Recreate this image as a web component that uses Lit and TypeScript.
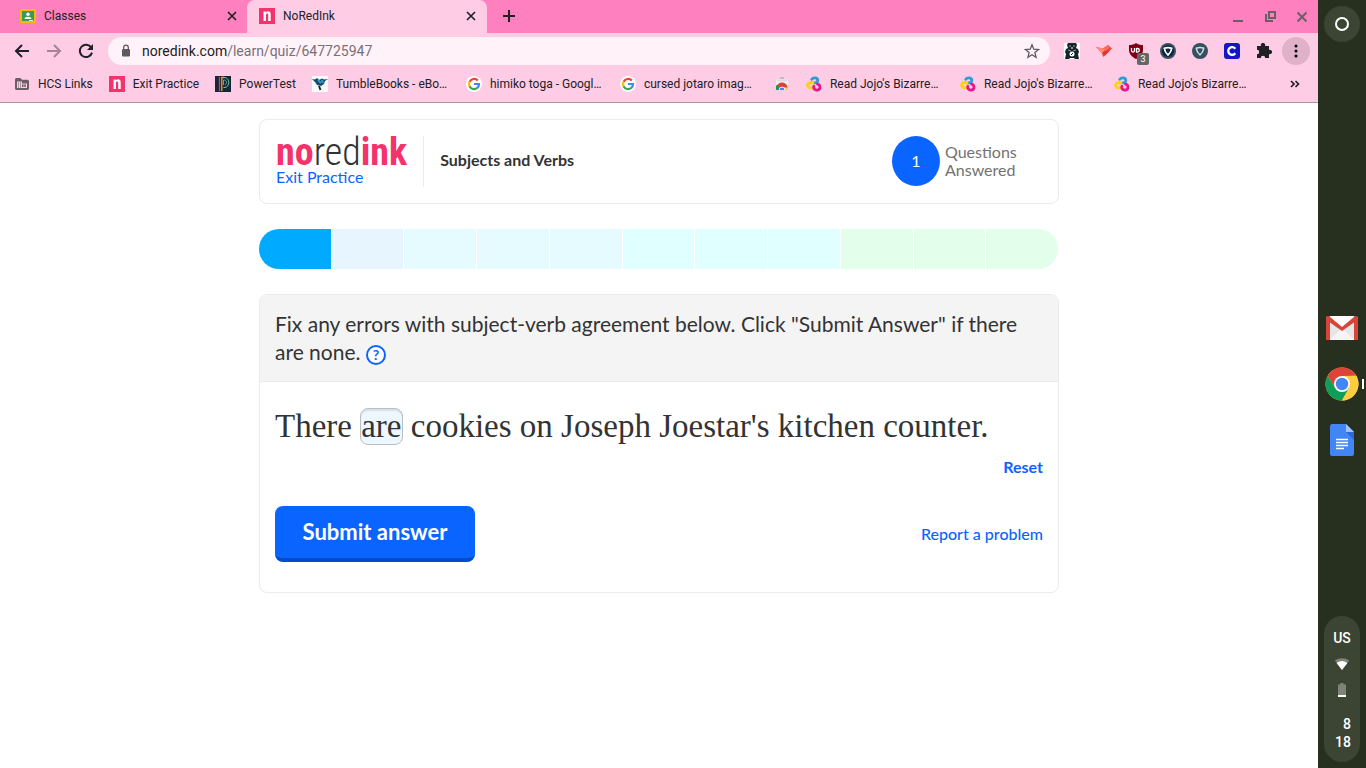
import { LitElement, html, css, svg, nothing } from "lit";
import { customElement, property } from "lit/decorators.js";

const noRedInk = svg`<rect width="16" height="16" fill="#f3336c"/><path d="M4.500 13V3.500h2.400v1C7.400 3.700 8.100 3.300 9 3.300c1.800 0 2.700 1 2.700 2.800V13H9.200V6.600c0-.8-.3-1.200-1-1.200S7 6 7 6.800V13z" fill="#fff"/>`;

const icons: Record<string, unknown> = {
  classes: svg`<rect y="1" width="16" height="14" rx="1" fill="#f6b90c"/><rect x="2" y="3" width="12" height="10" fill="#3a9a5a"/><circle cx="8" cy="6.300" r="1.700" fill="#fff"/><path d="M4.500 11c0-3 7-3 7 0z" fill="#fff"/><path d="M9 12h4v1H9z" fill="#e8f5e9"/>`,
  noredink: noRedInk,
  folder: svg`<path d="M2.500 2h4l1.500 1.700h5.500c.8 0 1.500.7 1.500 1.500v7.300c0 .8-.7 1.500-1.500 1.500h-11C1.700 14 1 13.300 1 12.500v-9C1 2.700 1.700 2 2.500 2z" fill="#6b5f67"/><path d="M3 5.500h5v2h5V12H3z" fill="#ffcce6"/><path d="M4 6.500h1v1H4zm2 0h1v1H6zM4 8.500h1v1H4zm2 0h1v1H6zm-2 2h1v1H4zm2 0h1v1H6zM8 8.500h4v2.500H8z" fill="#6b5f67"/><path d="M9 9.500h1v1H9zm1.500 0h1v1h-1z" fill="#ffcce6"/>`,
  power: svg`<rect width="16" height="16" fill="#14283a"/><path d="M4.500 1v14" stroke="#e0403c" stroke-width="1.300" fill="none"/><path d="M6.800 15V1.500H9" stroke="#f2a02c" stroke-width="1.300" fill="none"/><path d="M8 1.500h2c5 1 5 9 0 10H8.500" stroke="#7cc98c" fill="none"/><path d="M8.500 9V4h1.300c2.300.8 2.300 4 0 5" stroke="#4fa7b8" fill="none"/>`,
  tumble: svg`<rect width="16" height="16" fill="#f8fbfc"/><path d="M0 3l3 .5L5 2l2 2 3-1.500 2 1 4-.5-3 2-1 3-3 2-4-1-2-3z" fill="#174a6b"/><path d="M6 4l3 3M10 4l1 3" stroke="#3f94c6" stroke-width="2"/><path d="M7 10l1.500 4" stroke="#222" stroke-width="2"/>`,
  google: svg`<circle cx="8" cy="8" r="8" fill="#fff"/><g fill="none" stroke-width="2.200"><path d="M11.800 4.600A5 5 0 0 0 3.600 5.700" stroke="#ea4335"/><path d="M3.600 5.600a5 5 0 0 0 0 4.800" stroke="#fbbc05"/><path d="M3.500 10.300a5 5 0 0 0 7.900 1.400" stroke="#34a853"/><path d="M8 8h5a5 5 0 0 1-1.700 3.800" stroke="#4285f4"/></g>`,
  store: svg`<path d="M6 1h4v2H6z" fill="#c0bcc0"/><path d="M2 3.500h12V14H2z" fill="#f1f1f2"/><path d="M3 3.500h10v2H3z" fill="#dcdcde"/><path d="M2.500 14V11.500a5.500 5 0 0 1 11 0V14z" fill="#db4437"/><path d="M2 14v-4.500l1.500-.5L7 14z" fill="#0f9d58"/><path d="M14 14v-2.500H9.500V14z" fill="#ffcd40"/><path d="M4.800 14a3.200 3.200 0 0 1 6.400 0z" fill="#fff"/><path d="M5.600 14a2.400 2.400 0 0 1 4.800 0z" fill="#4285f4"/>`,
  jojo: svg`<g fill="none" stroke-width="2.800" stroke-linecap="round"><path d="M5.800 3.300c1.800-2.600 6-1.500 6 1 0 1.700-1.300 2.600-3.300 2.600" stroke="#2d9bd6"/><path d="M7 7c-3-1.300-6 .3-5.300 2.900.7 2.300 3.600 2.600 5.300 1" stroke="#fdd20a"/><path d="M11.500 8.200c3 .6 3.300 4.800.6 5.700-2.500.8-5-1-4.200-3.600" stroke="#e5198a"/></g>`,
  back: svg`<path d="M15 8H2.500M8 2L2 8l6 6" fill="none" stroke="#202124" stroke-width="2"/>`,
  forward: svg`<path d="M1 8h12.500M8 2l6 6-6 6" fill="none" stroke="#a3849a" stroke-width="2"/>`,
  reload: svg`<path d="M13.300 4.600A6.200 6.200 0 1 0 14 9.600" fill="none" stroke="#202124" stroke-width="2"/><path d="M15 1v6H9z" fill="#202124"/>`,
  lock: svg`<rect x="4" y="6" width="8" height="7.500" rx="1" fill="#5f5a5f"/><path d="M5.700 7V4.500a2.300 2.300 0 0 1 4.600 0V7" fill="none" stroke="#5f5a5f" stroke-width="1.300"/>`,
  star: svg`<path d="M8 1.800l1.800 4.400 4.800.4-3.700 3 1.200 4.700L8 11.800l-4.100 2.500 1.200-4.700-3.700-3 4.800-.4z" fill="none" stroke="#5f5a5f" stroke-width="1.300"/>`,
  bear: svg`<rect width="16" height="16" fill="#fff"/><path d="M4 0h8l1 2-1 3 2 1 1 3-1 2 1 5h-4l-1-1H6l-1 1H1l1-5-1-2 1-3 2-1-1-3z" fill="#18242c"/><path d="M5.500 2.500h1v1h-1zm4 0h1v1h-1zM7 4.500h2v1H7z" fill="#fff"/><path d="M4 7l3 1M12 7L9 8" stroke="#8ea2ad"/><circle cx="8" cy="11" r="2.500" fill="#fff"/><path d="M7 12l2-2" stroke="#18242c"/>`,
  bird: svg`<path d="M0 4l7 1.500L12 2l4 3.500-2 2-5 5-2 1.500-1-4z" fill="#f5443f"/><path d="M0 4l7 1.500 2 2L6 10z" fill="#ff8a78"/><path d="M7 5.500L12 2l1.500 3L9 8z" fill="#ff6b60"/><path d="M6 10l3-2 5-.5-5 5z" fill="#e2322f"/>`,
  shield: svg`<path d="M8 0c2 1.500 4 2 7 2v5c0 4-3 7-7 9-4-2-7-5-7-9V2c3 0 5-.5 7-2z" fill="#7d0014"/><path d="M3.500 5v2.500c0 2 3 2 3 0V5M8.500 5v4.500" fill="none" stroke="#fff" stroke-width="1.300"/><path d="M8.500 5.500h1a1.800 1.800 0 0 1 0 3.600h-1" fill="none" stroke="#fff" stroke-width="1.300"/>`,
  vpnOn: svg`<circle cx="8" cy="8" r="8" fill="#35505f"/><circle cx="8" cy="8" r="6" fill="#0f2340"/><path d="M4.200 5.200C6.500 4.500 9.500 4.500 11.800 5.200 11.300 8 10 10.400 8 12 6 10.400 4.700 8 4.200 5.200z" fill="none" stroke="#fff" stroke-width="1.700" stroke-linejoin="round"/>`,
  vpn: svg`<circle cx="8" cy="8" r="8" fill="#35505f"/><path d="M4.200 5.200C6.500 4.500 9.500 4.500 11.800 5.200 11.300 8 10 10.400 8 12 6 10.400 4.700 8 4.200 5.200z" fill="none" stroke="#d5dde1" stroke-width="1.500" stroke-linejoin="round"/>`,
  clever: svg`<rect width="16" height="16" rx="3" fill="#1414c8"/><path d="M11.300 5.700A3.900 3.900 0 1 0 11.300 10.300" fill="none" stroke="#fff" stroke-width="2.300"/>`,
  puzzle: svg`<path d="M1 3h4a2.200 2.200 0 1 1 4 0h4v4a2.200 2.200 0 1 1 0 4v4H9.200a2.200 2.200 0 0 0-4.400 0H1v-3.800a2.200 2.200 0 0 0 0-4.400z" fill="#202124"/>`,
  dots: svg`<circle cx="8" cy="3" r="1.500"/><circle cx="8" cy="8" r="1.500"/><circle cx="8" cy="13" r="1.500"/>`,
  close: svg`<path d="M4 4l8 8M12 4l-8 8" stroke="#202124" stroke-width="1.700"/>`,
  plus: svg`<path d="M2 8h12M8 2v12" stroke="#202124" stroke-width="2"/>`,
  min: svg`<path d="M3 12h10" stroke="#6b5f67" stroke-width="2"/>`,
  restore: svg`<path d="M7 3h6v6H7zM4 5v7h7" fill="none" stroke="#6b5f67" stroke-width="2"/>`,
  winClose: svg`<path d="M3.500 3.500l9 9M12.500 3.500l-9 9" stroke="#6b5f67" stroke-width="2"/>`,
  chevrons: svg`<path d="M4 5l3 3-3 3M8.500 5l3 3-3 3" fill="none" stroke="#202124" stroke-width="1.700"/>`,
  wifi: svg`<path d="M.8 4.600a12 12 0 0 1 14.400 0L8 14z" fill="#7e8578"/><path d="M2.600 7a9 9 0 0 1 10.800 0L8 14z" fill="#fff"/>`,
  battery: svg`<path d="M6.500 1h3v1.500H12V15H4V2.500h2.500z" fill="#7e8578"/><path d="M4 13h8v2H4z" fill="#fff"/>`,
};

@customElement("ui-icon")
class UiIcon extends LitElement {
  @property() name = "";
  static styles = css`
    :host { display: block; flex: none; width: 16px; height: 16px; }
    svg { display: block; width: 100%; height: 100%; }
  `;
  render() {
    return html`<svg viewBox="0 0 16 16" aria-hidden="true">${icons[this.name]}</svg>`;
  }
}

const bookmarks = [
  { icon: "folder", label: "HCS Links" },
  { icon: "noredink", label: "Exit Practice" },
  { icon: "power", label: "PowerTest" },
  { icon: "tumble", label: "TumbleBooks - eBo…", cut: true },
  { icon: "google", label: "himiko toga - Googl…", cut: true },
  { icon: "google", label: "cursed jotaro imag…", cut: true },
  { icon: "store", label: "" },
  { icon: "jojo", label: "Read Jojo's Bizarre…", cut: true },
  { icon: "jojo", label: "Read Jojo's Bizarre…", cut: true },
  { icon: "jojo", label: "Read Jojo's Bizarre…", cut: true },
];

@customElement("browser-chrome")
class BrowserChrome extends LitElement {
  static styles = css`
    :host { display: block; font: 12px/16px Roboto, sans-serif; color: #202124; background: #ffcce6; border-bottom: 1px solid #b58fa5; }
    button { display: flex; align-items: center; justify-content: center; border: 0; padding: 0; background: none; font: inherit; color: inherit; }
    .strip { display: flex; height: 33px; background: #ff80bf; }
    .tab { display: flex; align-items: center; gap: 8px; box-sizing: border-box; width: 240px; padding: 0 8px 1px 12px; }
    .tab.first { width: 247px; padding: 0 7px 1px 20px; }
    .tab .name { flex: 1; }
    .tab.active { background: #ffcce6; border-radius: 8px 8px 0 0; }
    .strip .new { width: 44px; padding-bottom: 1px; }
    .window { display: flex; align-items: center; gap: 16px; margin-left: auto; padding-right: 8px; }
    .bar { display: flex; align-items: center; height: 36px; padding: 0 8px 0 14px; }
    .nav { display: flex; gap: 16px; margin-right: 14px; }
    .omnibox { display: flex; flex: 1; align-items: center; gap: 8px; height: 28px; padding: 0 10px; border-radius: 14px; background: #fff3f9; }
    .url { flex: 1; font-size: 14px; color: #77707a; }
    .url b { font-weight: 400; color: #202124; }
    .extensions { display: flex; gap: 16px; margin: 0 10px 0 14px; }
    .counted { position: relative; }
    .count { position: absolute; left: 9px; top: 10px; width: 12px; height: 12px; border-radius: 2px; background: #666; color: #fff; font-size: 9px; line-height: 12px; text-align: center; }
    .menu { width: 28px; height: 28px; border-radius: 14px; background: #dfb2ca; }
    .marks { display: flex; align-items: center; gap: 16px; height: 33px; padding: 0 15px 3px 14px; box-sizing: border-box; }
    .mark { display: flex; align-items: center; gap: 8px; color: inherit; text-decoration: none; white-space: nowrap; }
    .cut { width: 114px; }
    .more { margin-left: auto; }
  `;
  render() {
    return html`
      <div class="strip">
        <div class="tab first"><ui-icon name="classes"></ui-icon><span class="name">Classes</span><button aria-label="Close Classes"><ui-icon name="close"></ui-icon></button></div>
        <div class="tab active"><ui-icon name="noredink"></ui-icon><span class="name">NoRedInk</span><button aria-label="Close NoRedInk"><ui-icon name="close"></ui-icon></button></div>
        <button class="new" aria-label="New tab"><ui-icon name="plus"></ui-icon></button>
        <div class="window">
          <button aria-label="Minimize"><ui-icon name="min"></ui-icon></button>
          <button aria-label="Restore"><ui-icon name="restore"></ui-icon></button>
          <button aria-label="Close window"><ui-icon name="winClose"></ui-icon></button>
        </div>
      </div>
      <div class="bar">
        <div class="nav">
          <button aria-label="Back"><ui-icon name="back"></ui-icon></button>
          <button aria-label="Forward"><ui-icon name="forward"></ui-icon></button>
          <button aria-label="Reload"><ui-icon name="reload"></ui-icon></button>
        </div>
        <div class="omnibox">
          <ui-icon name="lock"></ui-icon>
          <span class="url"><b>noredink.com</b>/learn/quiz/647725947</span>
          <button aria-label="Bookmark this page"><ui-icon name="star"></ui-icon></button>
        </div>
        <div class="extensions">
          <button aria-label="Reader"><ui-icon name="bear"></ui-icon></button>
          <button aria-label="Bird"><ui-icon name="bird"></ui-icon></button>
          <button class="counted" aria-label="Blocker"><ui-icon name="shield"></ui-icon><span class="count">3</span></button>
          <button aria-label="Protection"><ui-icon name="vpnOn"></ui-icon></button>
          <button aria-label="Proxy"><ui-icon name="vpn"></ui-icon></button>
          <button aria-label="Clever"><ui-icon name="clever"></ui-icon></button>
          <button aria-label="Extensions"><ui-icon name="puzzle"></ui-icon></button>
        </div>
        <button class="menu" aria-label="Menu"><ui-icon name="dots"></ui-icon></button>
      </div>
      <div class="marks">
        ${bookmarks.map((m) => html`<a class="mark" href="#" aria-label=${m.label || "Web Store"}><ui-icon name=${m.icon}></ui-icon>${m.label ? html`<span class=${m.cut ? "cut" : "label"}>${m.label}</span>` : nothing}</a>`)}
        <button class="more" aria-label="More bookmarks"><ui-icon name="chevrons"></ui-icon></button>
      </div>`;
  }
}

const steps = ["done", "next", "aqua", "aqua", "aqua", "cyan", "cyan", "cyan", "green", "green", "green"];

@customElement("quiz-page")
class QuizPage extends LitElement {
  static styles = css`
    :host { display: block; padding: 16px; font: 16px/18px Lato, sans-serif; color: #333; }
    a { color: #0a64ff; text-decoration: none; }
    .column { display: flex; flex-direction: column; gap: 25px; max-width: 800px; margin: 0 auto; }
    .card { border: 1px solid #ebebeb; border-radius: 8px; }
    .head { display: flex; align-items: flex-start; padding: 16px; }
    .brand { display: flex; flex-direction: column; height: 51px; padding-right: 16px; border-right: 1px solid #ebebeb; }
    .logo { font: 300 38px/32px "Roboto Condensed", "Noto Sans ExtraCondensed", "Open Sans Condensed", "Liberation Sans", sans-serif; color: #333; }
    .logo b { color: #f3336c; font-weight: 700; }
    .topic { flex: 1; margin: 0; padding: 15px 16px; font-size: 16px; line-height: 18px; font-weight: 700; }
    .score { display: flex; align-items: center; gap: 5px; width: 150px; color: #727272; }
    .number { display: flex; align-items: center; justify-content: center; width: 48px; height: 50px; border-radius: 50%; background: #0a64ff; color: #fff; }
    .tally { width: 80px; }
    .progress { display: flex; gap: 1px; height: 40px; margin-right: 1px; border-radius: 20px; overflow: hidden; }
    .step { flex: 1; }
    .done { background: #00aaff; }
    .next { background: #e6f5ff; }
    .aqua { background: #e5fbff; }
    .cyan { background: #e0ffff; }
    .green { background: #e3ffec; }
    .prompt { margin: 0; padding: 15px; border-bottom: 1px solid #ebebeb; border-radius: 7px 7px 0 0; background: #f4f4f4; font-size: 21px; line-height: 28px; font-weight: 400; }
    .help { display: inline-flex; align-items: center; justify-content: center; width: 20px; height: 20px; margin: -4px 0; padding: 0; border: 2px solid #0a64ff; border-radius: 50%; background: #fff; color: #0a64ff; font: 700 14px/16px Lato, sans-serif; vertical-align: middle; }
    .body { display: flex; flex-direction: column; padding: 24px 15px 30px; }
    .sentence { margin: 0; font: 33px/40px "Liberation Serif", serif; }
    .word { box-sizing: border-box; height: 37px; padding: 0; border: 1px solid #b9bec2; border-radius: 8px; background: #ecf7ff; box-shadow: inset 0 2px 0 #d8e2e8; font: inherit; line-height: 35px; color: inherit; }
    .reset { align-self: flex-end; margin-top: 12px; font-weight: 700; }
    .actions { display: flex; align-items: center; justify-content: space-between; margin-top: 30px; }
    .submit { width: 200px; height: 56px; padding: 0; border: 0; border-bottom: 4px solid #004bc9; border-radius: 8px; background: #0a64ff; color: #fff; font: 700 22px/28px Lato, sans-serif; }
    .report { font-weight: 500; }
  `;
  render() {
    return html`<main class="column">
      <header class="card head">
        <div class="brand"><span class="logo"><b>no</b>red<b>ink</b></span><a href="#">Exit Practice</a></div>
        <h1 class="topic">Subjects and Verbs</h1>
        <div class="score"><span class="number">1</span><span class="tally">Questions Answered</span></div>
      </header>
      <div class="progress" role="progressbar" aria-valuenow="1" aria-valuemax="11">${steps.map((s) => html`<span class="step ${s}"></span>`)}</div>
      <section class="card">
        <h2 class="prompt">Fix any errors with subject-verb agreement below. Click "Submit Answer" if there are none. <button class="help" aria-label="Help">?</button></h2>
        <div class="body">
          <p class="sentence">There <button class="word">are</button> cookies on Joseph Joestar's kitchen counter.</p>
          <a class="reset" href="#">Reset</a>
          <div class="actions"><button class="submit">Submit answer</button><a class="report" href="#">Report a problem</a></div>
        </div>
      </section>
    </main>`;
  }
}

@customElement("system-shelf")
class SystemShelf extends LitElement {
  static styles = css`
    :host { display: flex; flex-direction: column; justify-content: space-between; align-items: center; box-sizing: border-box; padding: 6px 0; background: #272f1f; color: #fff; font: 14px/18px Roboto, sans-serif; }
    button { display: block; border: 0; padding: 0; background: none; }
    svg { display: block; }
    .launcher { display: flex; align-items: center; justify-content: center; width: 36px; height: 36px; border-radius: 50%; background: #3c4434; }
    .ring { box-sizing: border-box; width: 14px; height: 14px; border: 2px solid #fff; border-radius: 50%; }
    .apps { display: flex; flex-direction: column; gap: 20px; margin-top: 110px; }
    .running { position: relative; }
    .mark { position: absolute; left: 38px; top: 13px; width: 2px; height: 10px; background: #fff; }
    .status { display: flex; flex-direction: column; align-items: center; box-sizing: border-box; width: 36px; height: 146px; padding: 13px 0; border-radius: 18px; background: #3c4434; }
    .lang { margin-bottom: 9px; font-weight: 500; }
    .status ui-icon { margin-bottom: 10px; }
    .clock { align-self: stretch; margin-top: 7px; padding-right: 9px; text-align: right; font-weight: 500; }
  `;
  render() {
    return html`
      <button class="launcher" aria-label="Launcher"><span class="ring"></span></button>
      <div class="apps">
        <button aria-label="Gmail"><svg width="36" height="36" viewBox="0 0 36 36"><path d="M2 7h32v23H2z" fill="#e6e6e6"/><path d="M6 30l12-12 12 12z" fill="#f5f5f5"/><path d="M5 6l13 11L31 6z" fill="#fff"/><path d="M2 30V8c0-2 2-3 4-1l12 10L30 7c2-2 4-1 4 1v22h-4V12.500L18 21 6 12.500V30z" fill="#d8443a"/></svg></button>
        <button class="running" aria-label="Chrome"><svg width="36" height="36" viewBox="0 0 36 36"><circle cx="18" cy="18" r="16.500" fill="#ffcd40"/><path d="M3.700 9.800A16.500 16.500 0 0 1 32.300 9.800L18 10l-7 12z" fill="#db4437"/><path d="M3.700 9.800A16.500 16.500 0 0 0 18 34.500L25 22H11z" fill="#0f9d58"/><path d="M32.300 9.800A16.500 16.500 0 0 1 18 34.500L25 22l-2-12z" fill="#ffcd40"/><circle cx="18" cy="18" r="8" fill="#fff"/><circle cx="18" cy="18" r="6.200" fill="#4285f4"/></svg><span class="mark"></span></button>
        <button aria-label="Docs"><svg width="36" height="36" viewBox="0 0 36 36"><path d="M8 2h14l8 8v22c0 1-1 2-2 2H8c-1 0-2-1-2-2V4c0-1 1-2 2-2z" fill="#4285f4"/><path d="M22 2l8 8h-8z" fill="#a1c2fa"/><path d="M22 10h8v8z" fill="#3067d6"/><path d="M12 17.500h12M12 20.500h12M12 23.500h12M12 26.500h8" stroke="#fff" stroke-width="1.500"/></svg></button>
      </div>
      <div class="status"><span class="lang">US</span><ui-icon name="wifi"></ui-icon><ui-icon name="battery"></ui-icon><time class="clock">8<br />18</time></div>`;
  }
}

@customElement("app-root")
class AppRoot extends LitElement {
  static styles = css`
    :host { display: grid; grid-template-columns: minmax(0, 1fr) 48px; min-height: 100vh; background: #fff; }
  `;
  render() {
    return html`<div class="browser"><browser-chrome></browser-chrome><quiz-page></quiz-page></div><system-shelf></system-shelf>`;
  }
}
